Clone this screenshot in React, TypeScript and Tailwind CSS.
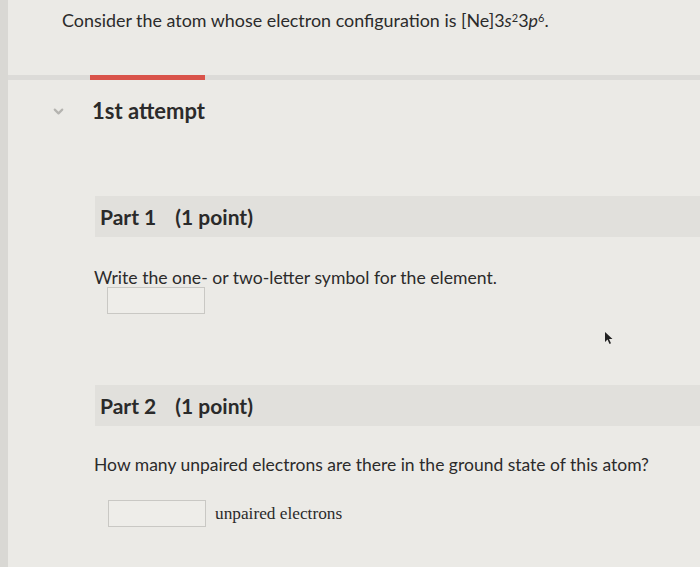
import { ChevronDown } from "lucide-react";

function AnswerBox() {
  return <div className="h-[27px] w-[98px] border border-[#c9c8c4] bg-[#eeede9]" />;
}

function PartHeader({ n }: { n: number }) {
  return (
    <div className="flex h-[41px] items-center bg-[#e1e0dc] pl-[5px] text-[21px] font-bold text-[#2a2a2a]">
      <span>Part {n}</span>
      <span className="ml-[19px]">(1 point)</span>
    </div>
  );
}

export default function App() {
  return (
    <div className="flex h-[567px] w-[700px] overflow-hidden bg-[#ebeae6] font-['Lato','Noto_Sans',sans-serif] text-[#2b2b2b]">
      <div className="w-[8px] shrink-0 bg-[#d9d8d4]" />
      <div className="relative flex-1">
        <p className="pl-[54px] pt-[8px] text-[17.9px] leading-[24px]">
          Consider the atom whose electron configuration is [Ne]3
          <i>s</i>
          <sup className="text-[11px]">2</sup>3<i>p</i>
          <sup className="text-[11px]">6</sup>.
        </p>

        <div className="mt-[43px] h-[5px] bg-[#dcdbd8]">
          <div className="ml-[82px] h-[5px] w-[115px] bg-[#d9534a]" />
        </div>

        <div className="mt-[18px] flex h-[26px] items-center">
          <ChevronDown className="ml-[43px] h-[15px] w-[15px] text-[#b5b4b0]" strokeWidth={3.5} />
          <span className="ml-[26px] text-[22px] font-bold leading-[26px] text-[#2b2b2b]">1st attempt</span>
        </div>

        <div className="ml-[87px] mt-[72px]">
          <PartHeader n={1} />
          <p className="-ml-[1px] mt-[31px] text-[17.6px] leading-[20px]">
            Write the one- or two-letter symbol for the element.
          </p>
          <div className="-mt-[1px] ml-[12px]">
            <AnswerBox />
          </div>

          <div className="mt-[71px]">
            <PartHeader n={2} />
          </div>
          <p className="-ml-[1px] mt-[28px] text-[17.5px] leading-[22px]">
            How many unpaired electrons are there in the ground state of this atom?
          </p>
          <div className="ml-[13px] mt-[24px] flex items-center">
            <AnswerBox />
            <span className="ml-[9px] font-['Liberation_Serif',serif] text-[17.3px] text-[#2b2b2b]">
              unpaired electrons
            </span>
          </div>
        </div>

        <svg className="absolute left-[596px] top-[331px]" width="10" height="14" viewBox="0 0 10 14">
          <path d="M1 1 L1 11 L3.5 8.5 L5.5 13 L7 12.3 L5 8 L8.5 8 Z" fill="#222" />
        </svg>
      </div>
    </div>
  );
}
